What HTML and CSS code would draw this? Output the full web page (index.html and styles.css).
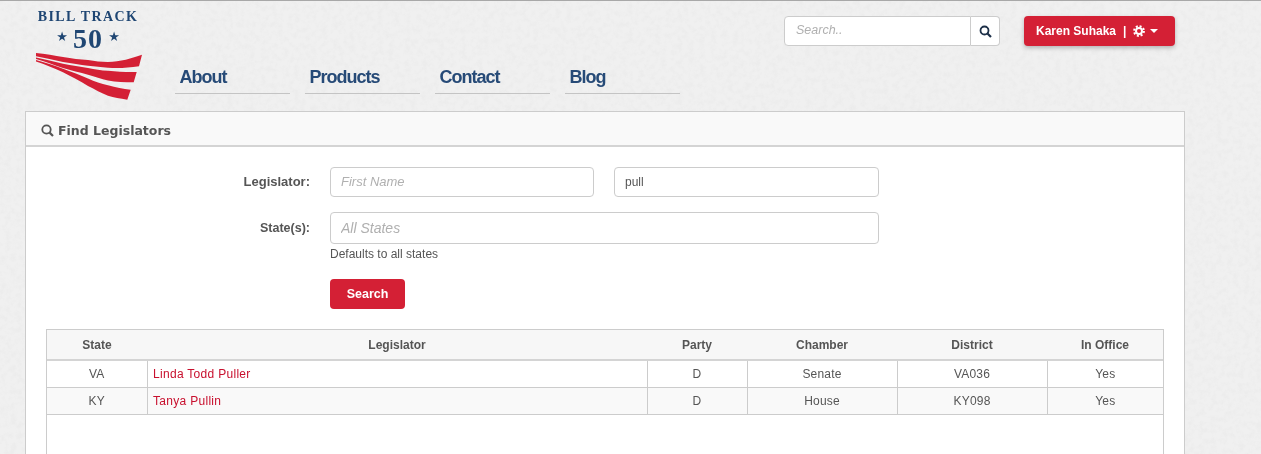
FILE: index.html
```html
<!DOCTYPE html>
<html lang="en">
<head>
  <meta charset="UTF-8">
  <title>Find Legislators - BillTrack50</title>
  <link rel="stylesheet" href="styles.css">
</head>
<body>

  <svg class="paper" aria-hidden="true">
    <filter id="grain">
      <feTurbulence type="fractalNoise" baseFrequency="0.18" numOctaves="4" seed="4"/>
      <feColorMatrix values="0 0 0 0 0.5  0 0 0 0 0.5  0 0 0 0 0.5  0.7 0 0 0 -0.28"/>
    </filter>
    <rect width="100%" height="100%" filter="url(#grain)" opacity="0.22"/>
  </svg>

  <header>
    <a class="logo" href="#">
      <svg width="110" height="94" viewBox="0 0 110 94">
        <text class="logo-name" x="53" y="11" text-anchor="middle">BILL TRACK</text>
        <text class="logo-star" x="27" y="30.5" text-anchor="middle">★</text>
        <text class="logo-num" x="53" y="37.5" text-anchor="middle">50</text>
        <text class="logo-star" x="79" y="30.5" text-anchor="middle">★</text>
        <path class="logo-flag" d="M1 43C10 44 20 45.5 28 47C37 48.5 45 49.5 53 50C60 51 66 52 73 52C85 52 97 48 107 44.7L104 56.3C93 58 83 58.5 73 57.8C66 57.3 60 56.5 53 55.8C45 54.8 37 53.3 28 52C19 50 10 48 1 46.3Z"/>
        <path class="logo-flag" d="M1 47.5C10 49.5 19 51.5 28 53.7C37 55.5 45 56.5 53 58C60 59.2 66 60.5 73 60.8C83 61.7 92 62.3 101.7 62L98.7 72.3C90 72.3 81 72 73 70.5C66 69 60 67 53 64.8C45 62.5 36 60.5 28 58C19 55 10 51.5 1 49Z"/>
        <path class="logo-flag" d="M1 50C10 52.5 19 55 28 58.7C37 62 45 65 53 68.5C60 71.5 66 74 73 75.2C81 77.3 88 79 95.7 79.7L92.3 89.7C85 88.5 79 87.5 73 85.7C66 83 60 79.5 53 76C45 71 36 66.5 28 62.3C19 58 10 54.5 1 51.5Z"/>
      </svg>
    </a>

    <nav>
      <a href="#">About</a>
      <a href="#">Products</a>
      <a href="#">Contact</a>
      <a href="#">Blog</a>
    </nav>

    <div class="top-tools">
      <div class="top-search">
        <input type="text" placeholder="Search..">
        <button>
          <svg width="13" height="13" viewBox="0 0 13 13"><circle cx="5.5" cy="5.5" r="4" fill="none" stroke="#1c2f48" stroke-width="1.8"/><path d="M8.5 8.5L12 12" stroke="#1c2f48" stroke-width="2.2"/></svg>
        </button>
      </div>
      <button class="user-btn">
        <span>Karen Suhaka</span>
        <span class="sep">|</span>
        <svg class="gear" width="12" height="12" viewBox="0 0 12 12"><circle cx="6" cy="6" r="4.9" fill="none" stroke="#fff" stroke-width="2" stroke-dasharray="2 1.85"/><circle cx="6" cy="6" r="3" fill="none" stroke="#fff" stroke-width="2"/></svg>
        <span class="caret"></span>
      </button>
    </div>
  </header>

  <section class="panel">
    <h2 class="panel-title">
      <svg width="13" height="13" viewBox="0 0 13 13"><circle cx="5.5" cy="5.5" r="4.2" fill="none" stroke="#555" stroke-width="1.8"/><path d="M8.6 8.6L12 12" stroke="#555" stroke-width="2.2"/></svg>
      Find Legislators
    </h2>

    <div class="panel-body">
      <form class="search-form">
        <div class="form-row">
          <label>Legislator:</label>
          <div class="field-pair">
            <input type="text" placeholder="First Name">
            <input type="text" value="pull">
          </div>
        </div>
        <div class="form-row states-row">
          <label>State(s):</label>
          <div class="field-wide">
            <input class="states-input" type="text" placeholder="All States">
            <p class="help">Defaults to all states</p>
          </div>
        </div>
        <div class="form-row submit-row">
          <button class="search-btn" type="button">Search</button>
        </div>
      </form>

      <div class="results">
        <table>
          <thead>
            <tr>
              <th class="col-state">State</th>
              <th class="col-name">Legislator</th>
              <th class="col-party">Party</th>
              <th class="col-chamber">Chamber</th>
              <th class="col-district">District</th>
              <th>In Office</th>
            </tr>
          </thead>
          <tbody>
            <tr>
              <td>VA</td>
              <td class="name"><a href="#">Linda Todd Puller</a></td>
              <td>D</td>
              <td>Senate</td>
              <td>VA036</td>
              <td>Yes</td>
            </tr>
            <tr class="alt">
              <td>KY</td>
              <td class="name"><a href="#">Tanya Pullin</a></td>
              <td>D</td>
              <td>House</td>
              <td>KY098</td>
              <td>Yes</td>
            </tr>
          </tbody>
        </table>
      </div>
    </div>
  </section>

</body>
</html>
```

FILE: styles.css
```css
* {
  margin: 0;
  padding: 0;
  box-sizing: border-box;
}

html, body {
  height: 454px;
  overflow: hidden;
}

body {
  background-color: #f0f0f0;
  border-top: 1px solid #a8a8a8;
  font-family: "Liberation Sans", Arial, sans-serif;
  font-size: 12px;
  color: #555;
}

.paper {
  position: fixed;
  top: 0;
  left: 0;
  width: 100%;
  height: 100%;
  z-index: -1;
}

input {
  font-family: "Liberation Sans", Arial, sans-serif;
  color: #555;
  background-color: #fff;
  border: 1px solid #ccc;
  border-radius: 4px;
  outline: none;
}

input::placeholder {
  color: #b0b0b0;
  font-style: italic;
}

button {
  font-family: "Liberation Sans", Arial, sans-serif;
  cursor: pointer;
}

/* header */
header {
  display: flex;
  height: 110px;
  padding-left: 35px;
}

.logo {
  display: block;
  width: 110px;
  height: 94px;
  margin-top: 9px;
}

.logo-name {
  font-family: "Liberation Serif", serif;
  font-weight: bold;
  font-size: 14px;
  letter-spacing: 1.4px;
  fill: #1f4673;
}

.logo-num {
  font-family: "Liberation Serif", serif;
  font-weight: bold;
  font-size: 28px;
  letter-spacing: 1px;
  fill: #1f4673;
}

.logo-star {
  font-family: "DejaVu Sans", sans-serif;
  font-size: 13px;
  fill: #1f4673;
}

.logo-flag {
  fill: #d42035;
}

nav {
  display: flex;
  gap: 15px;
  margin: 56px 0 0 30px;
  height: 37px;
}

nav a {
  display: block;
  width: 115px;
  padding: 10px 0 0 4.5px;
  border-bottom: 1px solid #c4c4c4;
  color: #264a77;
  font-size: 18px;
  font-weight: bold;
  letter-spacing: -1px;
  text-decoration: none;
}

.top-tools {
  display: flex;
  gap: 24px;
  margin: 15px 0 0 104px;
  height: 30px;
}

.top-search {
  display: flex;
  width: 216px;
}

.top-search input {
  width: 187px;
  height: 30px;
  padding: 0 11px 2px;
  font-size: 12.5px;
  border-radius: 4px 0 0 4px;
}

.top-search button {
  width: 29px;
  height: 30px;
  background-color: #fff;
  border: 1px solid #ccc;
  border-left: none;
  border-radius: 0 4px 4px 0;
}

.top-search svg {
  display: block;
  margin: 1px auto 0;
}

.user-btn {
  display: flex;
  align-items: center;
  width: 151px;
  height: 30px;
  padding-left: 12px;
  background-color: #d42035;
  border: none;
  border-radius: 4px;
  box-shadow: 0 2px 4px rgba(0, 0, 0, 0.25);
  color: #fff;
  font-size: 12px;
  font-weight: bold;
}

.sep {
  margin: 0 7px;
}

.gear {
  margin: 0 5px 0 0;
}

.caret {
  border-top: 4px solid #fff;
  border-left: 4px solid transparent;
  border-right: 4px solid transparent;
}

/* panel */
.panel {
  width: 1160px;
  margin-left: 25px;
  height: 400px;
  background-color: #fff;
  border: 1px solid #ccc;
}

.panel-title {
  display: flex;
  align-items: center;
  gap: 4px;
  height: 35px;
  padding: 4px 0 0 15px;
  background-color: #f9f9f9;
  border-bottom: 2px solid #d4d4d4;
  font-family: "DejaVu Sans", sans-serif;
  font-size: 12.5px;
  font-weight: bold;
  color: #555;
}

.panel-body {
  padding: 20px 20px 0;
}

.form-row {
  display: flex;
  gap: 20px;
}

.form-row label {
  width: 264px;
  padding-top: 7px;
  text-align: right;
  font-weight: bold;
  font-size: 13px;
}

.field-pair {
  display: flex;
  gap: 20px;
}

.field-pair input {
  width: 264px;
  height: 30px;
  padding: 0 10px;
  font-size: 12px;
}

.field-pair input + input {
  width: 265px;
}

.field-pair input::placeholder {
  font-size: 13px;
}

.states-row {
  margin-top: 15px;
}

.states-row label {
  padding-top: 9px;
  font-size: 12.5px;
}

.states-input {
  display: block;
  width: 549px;
  height: 32px;
  padding: 0 10px;
  font-size: 14px;
}

.help {
  margin-top: 3px;
  font-size: 12px;
  line-height: 15px;
}

.submit-row {
  margin: 17px 0 0 284px;
}

.search-btn {
  width: 75px;
  height: 30px;
  background-color: #d42035;
  border: none;
  border-radius: 4px;
  color: #fff;
  font-size: 12.5px;
  font-weight: bold;
}

/* results */
.results {
  height: 200px;
  margin-top: 20px;
  border: 1px solid #ccc;
}

table {
  width: 100%;
  border-collapse: collapse;
  table-layout: fixed;
}

th {
  height: 30px;
  background-color: #f7f7f7;
  border-bottom: 2px solid #d4d4d4;
  font-size: 12px;
  font-weight: bold;
}

td {
  height: 27px;
  border-bottom: 1px solid #ccc;
  border-left: 1px solid #ccc;
  text-align: center;
  font-size: 12px;
  letter-spacing: 0.2px;
}

td:first-child {
  border-left: none;
}

.alt td {
  background-color: #f9f9f9;
}

.col-state {
  width: 100px;
}

.col-name {
  width: 500px;
}

.col-party {
  width: 100px;
}

.col-chamber,
.col-district {
  width: 150px;
}

td.name {
  padding-left: 5.5px;
  text-align: left;
  letter-spacing: 0.3px;
}

td.name a {
  color: #c8102e;
  text-decoration: none;
}
```
